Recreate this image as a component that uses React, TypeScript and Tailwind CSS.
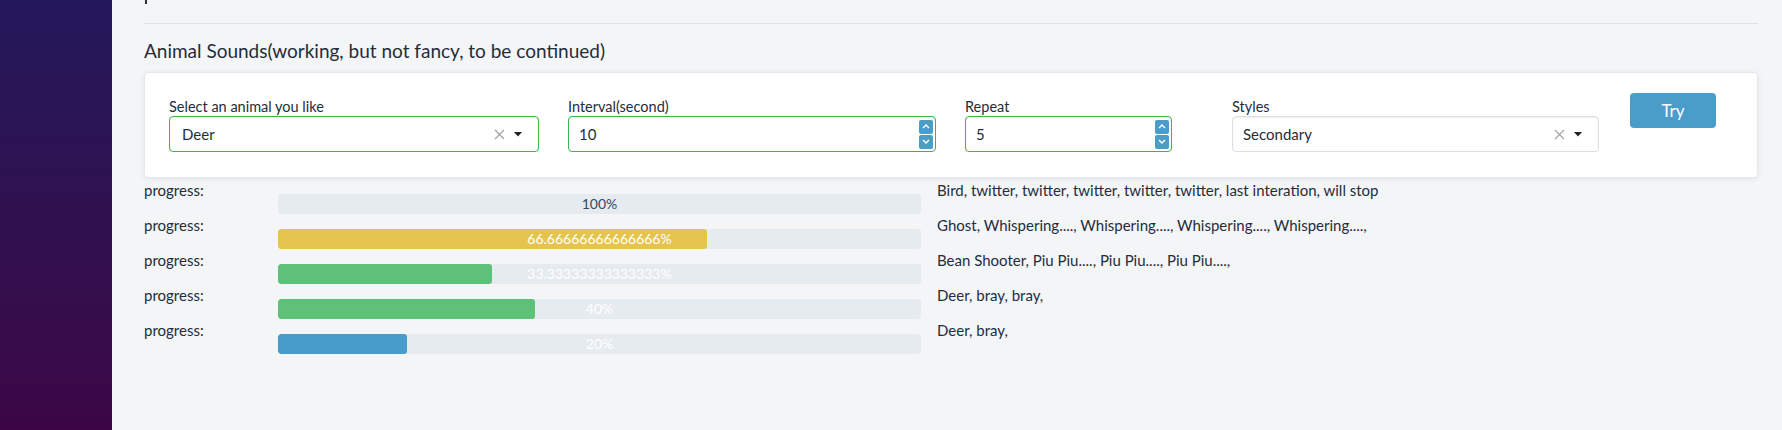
import React from 'react'

const font = { fontFamily: 'Lato, "Open Sans", sans-serif' }

interface ProgressRow {
  value: number
  label: string
  fill: string
  text: string
  message: string
}

const rows: ProgressRow[] = [
  {
    value: 100,
    label: '100%',
    fill: 'bg-[#e6ebef]',
    text: 'text-[#34495e]',
    message: 'Bird, twitter, twitter, twitter, twitter, twitter, last interation, will stop',
  },
  {
    value: 66.66666666666666,
    label: '66.66666666666666%',
    fill: 'bg-[#e4c44d]',
    text: 'text-white',
    message: 'Ghost, Whispering...., Whispering...., Whispering...., Whispering....,',
  },
  {
    value: 33.33333333333333,
    label: '33.33333333333333%',
    fill: 'bg-[#5dc177]',
    text: 'text-white',
    message: 'Bean Shooter, Piu Piu...., Piu Piu...., Piu Piu....,',
  },
  {
    value: 40,
    label: '40%',
    fill: 'bg-[#5dc177]',
    text: 'text-white',
    message: 'Deer, bray, bray,',
  },
  {
    value: 20,
    label: '20%',
    fill: 'bg-[#489cc9]',
    text: 'text-white',
    message: 'Deer, bray,',
  },
]

function ClearCaret() {
  return (
    <div className="flex items-center gap-[9px]">
      <svg width="11" height="11" viewBox="0 0 11 11">
        <path d="M1 1L10 10M10 1L1 10" stroke="#a3a3a3" strokeWidth="1.2" />
      </svg>
      <svg width="8" height="5" viewBox="0 0 8 5">
        <path d="M0 0H8L4 4.5Z" fill="#222" />
      </svg>
    </div>
  )
}

function Spinner() {
  return (
    <div className="flex flex-col gap-[1px]">
      <div className="w-[14px] h-[14px] rounded-[2px] bg-[#4a9cc9] flex items-center justify-center">
        <svg width="8" height="5" viewBox="0 0 8 5">
          <path d="M1 4L4 1L7 4" stroke="#fff" strokeWidth="1.4" fill="none" />
        </svg>
      </div>
      <div className="w-[14px] h-[14px] rounded-[2px] bg-[#4a9cc9] flex items-center justify-center">
        <svg width="8" height="5" viewBox="0 0 8 5">
          <path d="M1 1L4 4L7 1" stroke="#fff" strokeWidth="1.4" fill="none" />
        </svg>
      </div>
    </div>
  )
}

function Field({
  label,
  width,
  children,
  valid = true,
}: {
  label: string
  width: string
  children: React.ReactNode
  valid?: boolean
}) {
  return (
    <div className={`${width} flex flex-col`}>
      <label className="text-[14.5px] leading-[19px] text-[#1f2d3d]">{label}</label>
      <div
        className={`h-[36px] rounded-[4px] border bg-white flex items-center justify-between shadow-[inset_0_1px_2px_rgba(0,0,0,0.07)] ${
          valid ? 'border-[#3cb54a]' : 'border-[#dcdfe6]'
        }`}
      >
        {children}
      </div>
    </div>
  )
}

export default function App() {
  return (
    <div className="flex w-[1782px] h-[430px] overflow-hidden" style={font}>
      {/* Sidebar */}
      <div className="w-[112px] h-full bg-gradient-to-b from-[#22175a] to-[#3c0646]" />

      {/* Main */}
      <div className="flex-1 bg-[#f4f5f7] pl-[32px] pr-[24px]">
        <div className="h-[4px] pl-[1px]">
          <div className="w-[2px] h-[4px] bg-[#333]" />
        </div>
        <div className="mt-[19px] border-t border-[#dee2e6]" />

        <h2 className="mt-[14px] mb-[8px] text-[19px] leading-[26px] text-[#1f2d3d]">
          Animal Sounds(working, but not fancy, to be continued)
        </h2>

        {/* Form card */}
        <div className="h-[106px] bg-white rounded-[4px] border border-[#e4e7eb] shadow-[0_1px_6px_rgba(0,0,0,0.07)] flex pl-[24px]">
          <div className="flex pt-[24px]">
            <Field label="Select an animal you like" width="w-[370px]">
              <span className="pl-[12px] text-[15px] text-[#1f2d3d]">Deer</span>
              <div className="pr-[16px]">
                <ClearCaret />
              </div>
            </Field>
            <div className="w-[29px]" />
            <Field label="Interval(second)" width="w-[368px]">
              <span className="pl-[10px] text-[15px] text-[#1f2d3d]">10</span>
              <div className="pr-[2px]">
                <Spinner />
              </div>
            </Field>
            <div className="w-[29px]" />
            <Field label="Repeat" width="w-[207px]">
              <span className="pl-[10px] text-[15px] text-[#1f2d3d]">5</span>
              <div className="pr-[2px]">
                <Spinner />
              </div>
            </Field>
            <div className="w-[60px]" />
            <Field label="Styles" width="w-[367px]" valid={false}>
              <span className="pl-[10px] text-[15px] text-[#1f2d3d]">Secondary</span>
              <div className="pr-[16px]">
                <ClearCaret />
              </div>
            </Field>
          </div>
          <div className="w-[31px]" />
          <div className="pt-[20px]">
            <button className="w-[86px] h-[35px] rounded-[4px] bg-[#4a9cc9] text-white text-[17px]">
              Try
            </button>
          </div>
        </div>

        {/* Progress list */}
        <div className="mt-[1px] flex flex-col">
          {rows.map((r, i) => (
            <div key={i} className="flex h-[35px] text-[15px] leading-[22px] text-[#1f2d3d]">
              <div className="w-[134px]">progress:</div>
              <div className="w-[643px] pt-[15px]">
                <div className="relative h-[20px] rounded-[3px] bg-[#e6ebef] overflow-hidden">
                  <div className={`h-full rounded-[3px] ${r.fill}`} style={{ width: `${r.value}%` }} />
                  <div
                    className={`absolute inset-0 flex items-center justify-center text-[14px] leading-[20px] ${r.text}`}
                  >
                    {r.label}
                  </div>
                </div>
              </div>
              <div className="ml-[16px]">{r.message}</div>
            </div>
          ))}
        </div>
      </div>
    </div>
  )
}
